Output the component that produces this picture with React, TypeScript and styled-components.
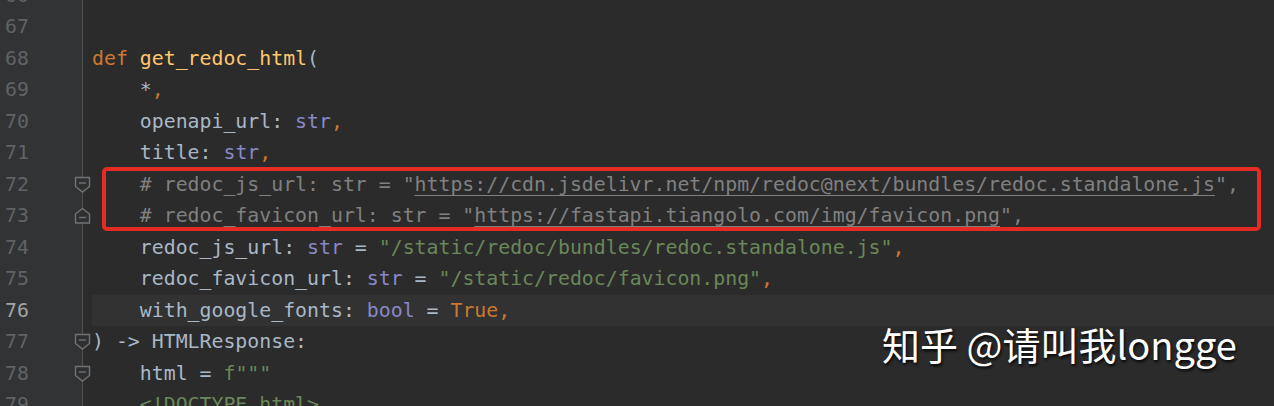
import React from "react";
import styled, { createGlobalStyle } from "styled-components";

const GlobalStyle = createGlobalStyle`
  html, body { margin: 0; padding: 0; background: #2b2b2b; overflow: hidden; }
`;

const Editor = styled.div`
  position: relative;
  width: 1274px;
  height: 406px;
  overflow: hidden;
  background: #2b2b2b;
  font-family: "DejaVu Sans Mono", "Liberation Mono", monospace;
  font-size: 19.85px;
  color: #a9b7c6;
`;

const Lines = styled.div`
  display: flex;
  flex-direction: column;
  margin-top: -20.25px;
`;

const Group = styled.div`
  position: relative;
  display: flex;
  flex-direction: column;
`;

const Row = styled.div`
  display: flex;
  height: 31.5px;
  line-height: 31.5px;
`;

const Num = styled.div<{ $current?: boolean }>`
  width: 65px;
  padding-left: 5px;
  background: #313335;
  color: ${(p) => (p.$current ? "#a4a3a3" : "#606366")};
`;

const Fold = styled.div`
  width: 22px;
  display: flex;
  align-items: center;
  justify-content: flex-start;
  padding-left: 4px;
  box-sizing: border-box;
  background: linear-gradient(
    to right,
    #313335 0,
    #313335 12px,
    #4e5052 12px,
    #4e5052 13px,
    #2b2b2b 13px
  );
`;

const Code = styled.div<{ $current?: boolean }>`
  flex: 1;
  white-space: pre;
  background: ${(p) => (p.$current ? "#323232" : "transparent")};
`;

const Kw = styled.span`color: #cc7832;`;
const Fn = styled.span`color: #ffc66d;`;
const Bi = styled.span`color: #8888c6;`;
const Str = styled.span`color: #6a8759;`;
const Cmt = styled.span`color: #808080;`;
const Url = styled.span`
  text-decoration: underline;
  text-underline-offset: 4px;
  text-decoration-thickness: 1px;
`;

const RedBox = styled.div`
  position: absolute;
  left: 102px;
  right: 13px;
  top: -2px;
  bottom: 0.5px;
  border: 4px solid #e62b25;
  border-radius: 5px;
  pointer-events: none;
`;

const Watermark = styled.div`
  position: absolute;
  left: 882px;
  top: 321px;
  font-family: "Noto Sans CJK SC", "Noto Sans", sans-serif;
  font-size: 38px;
  line-height: 46px;
  color: #ffffff;
  text-shadow: 1px 2px 3px rgba(0, 0, 0, 0.9);
  white-space: pre;
`;

type FoldKind = "start" | "end" | undefined;

const FoldMark: React.FC<{ kind: FoldKind }> = ({ kind }) => {
  if (!kind) return null;
  const d =
    kind === "start"
      ? "M1.5 1.5 H15.5 V10.5 L8.5 16 L1.5 10.5 Z"
      : "M1.5 16 H15.5 V7 L8.5 1.5 L1.5 7 Z";
  const y = kind === "start" ? 7 : 10.5;
  return (
    <svg width="17" height="18" viewBox="0 0 17 18">
      <path d={d} fill="#2f3032" stroke="#707274" strokeWidth="1.4" />
      <path d={`M5 ${y} H12`} stroke="#707274" strokeWidth="1.4" />
    </svg>
  );
};

type Line = { n: number; fold?: FoldKind; c?: React.ReactNode };

const I = "    ";

const before: Line[] = [
  { n: 66 },
  { n: 67 },
  {
    n: 68,
    c: (
      <>
        <Kw>def</Kw> <Fn>get_redoc_html</Fn>(
      </>
    ),
  },
  {
    n: 69,
    c: (
      <>
        {I}*<Kw>,</Kw>
      </>
    ),
  },
  {
    n: 70,
    c: (
      <>
        {I}openapi_url: <Bi>str</Bi>
        <Kw>,</Kw>
      </>
    ),
  },
  {
    n: 71,
    c: (
      <>
        {I}title: <Bi>str</Bi>
        <Kw>,</Kw>
      </>
    ),
  },
];

const boxed: Line[] = [
  {
    n: 72,
    fold: "start",
    c: (
      <Cmt>
        {I}# redoc_js_url: str = "
        <Url>https://cdn.jsdelivr.net/npm/redoc@next/bundles/redoc.standalone.js</Url>",
      </Cmt>
    ),
  },
  {
    n: 73,
    fold: "end",
    c: (
      <Cmt>
        {I}# redoc_favicon_url: str = "
        <Url>https://fastapi.tiangolo.com/img/favicon.png</Url>",
      </Cmt>
    ),
  },
];

const after: Line[] = [
  {
    n: 74,
    c: (
      <>
        {I}redoc_js_url: <Bi>str</Bi> = <Str>"/static/redoc/bundles/redoc.standalone.js"</Str>
        <Kw>,</Kw>
      </>
    ),
  },
  {
    n: 75,
    c: (
      <>
        {I}redoc_favicon_url: <Bi>str</Bi> = <Str>"/static/redoc/favicon.png"</Str>
        <Kw>,</Kw>
      </>
    ),
  },
  {
    n: 76,
    c: (
      <>
        {I}with_google_fonts: <Bi>bool</Bi> = <Kw>True,</Kw>
      </>
    ),
  },
  { n: 77, fold: "start", c: <>) -&gt; HTMLResponse:</> },
  {
    n: 78,
    fold: "start",
    c: (
      <>
        {I}html = <Str>f"""</Str>
      </>
    ),
  },
  { n: 79, c: <Str>{I}&lt;!DOCTYPE html&gt;</Str> },
];

const CURRENT = 76;

const renderRow = (l: Line) => (
  <Row key={l.n}>
    <Num $current={l.n === CURRENT}>{l.n}</Num>
    <Fold>
      <FoldMark kind={l.fold} />
    </Fold>
    <Code $current={l.n === CURRENT}>{l.c ?? " "}</Code>
  </Row>
);

export default function App() {
  return (
    <>
      <GlobalStyle />
      <Editor>
        <Lines>
          {before.map(renderRow)}
          <Group>
            {boxed.map(renderRow)}
            <RedBox />
          </Group>
          {after.map(renderRow)}
        </Lines>
        <Watermark>知乎 @请叫我longge</Watermark>
      </Editor>
    </>
  );
}
